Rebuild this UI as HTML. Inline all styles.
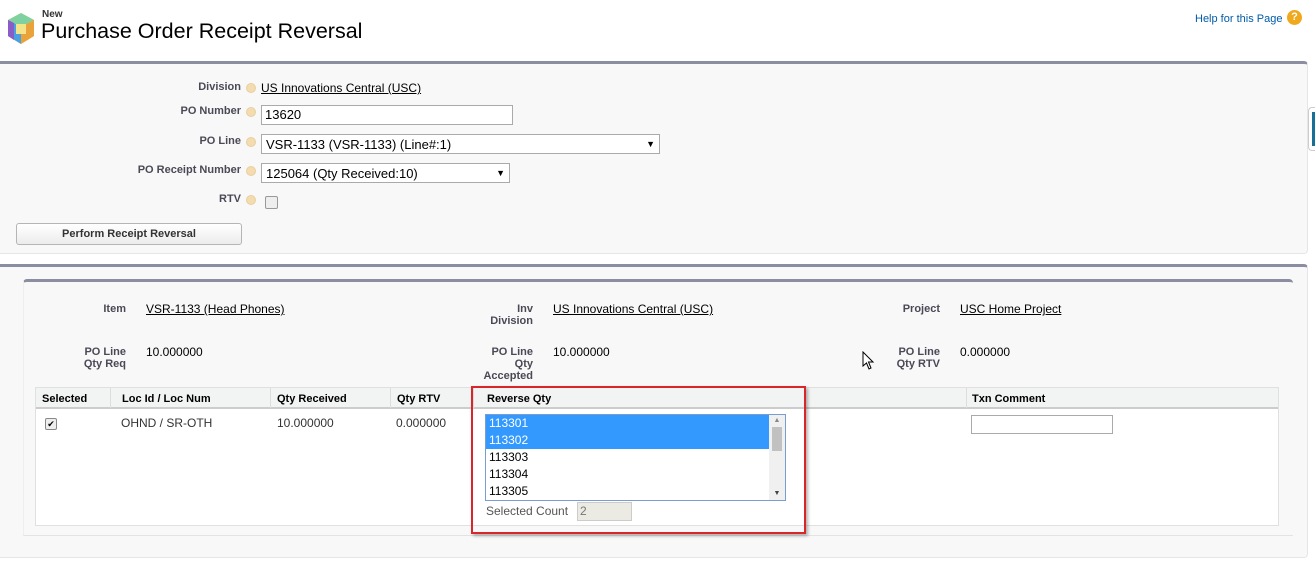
<!DOCTYPE html>
<html><head><style>
body{margin:0;width:1315px;height:565px;background:#fff;font-family:"Liberation Sans",Arial,sans-serif;position:relative;overflow:hidden;color:#000}
.a{position:absolute}
.lbl{font-size:11px;font-weight:bold;color:#4a4a56;text-align:right}
.q{width:10px;height:10px;border-radius:50%;background:#f2dcb0;border:1px solid #e9cf9c;box-sizing:border-box}
.u{text-decoration:underline;font-size:12px;color:#000}
.l2{font-size:11px;font-weight:bold;color:#4a4a56;text-align:right;line-height:12px}
.v{font-size:12px;color:#000}
.th{font-size:11px;font-weight:bold;color:#000;top:393px}
.td{font-size:12px;color:#333;top:416px}
</style></head><body>
<svg class="a" style="left:6px;top:12px" width="30" height="34" viewBox="0 0 30 34">
<polygon points="15,1 28,8 28,24 15,32 2,24 2,8" fill="#f2c94c"/>
<polygon points="15,1 28,8 15,15 2,8" fill="#7fd1a0"/>
<polygon points="2,8 15,15 15,32 2,24" fill="#4aa0e0"/>
<polygon points="28,8 15,15 15,32 28,24" fill="#e9a33a"/>
<polygon points="2,8 8,11 8,28 2,24" fill="#8a5cc8"/>
<rect x="10" y="12" width="10" height="10" fill="#f5e38a"/>
</svg>
<div class="a" style="left:42px;top:9px;font-size:10px;font-weight:bold;color:#333">New</div>
<div class="a" style="left:41px;top:19px;font-size:21.5px;color:#000">Purchase Order Receipt Reversal</div>
<div class="a" style="left:1195px;top:13px;font-size:11px;color:#015ba7">Help for this Page</div>
<div class="a" style="left:1287px;top:10px;width:15px;height:15px;border-radius:50%;background:#f0a81c;color:#fff;font-size:11px;font-weight:bold;text-align:center;line-height:15px">?</div>

<div class="a" style="left:0;top:61px;width:1307px;height:189px;background:#f8f8f8;border-top:3px solid #8a8ea0;border-right:1px solid #e6e6e6;border-bottom:1px solid #e6e6e6;border-radius:0 4px 4px 0"></div>
<div class="a" style="left:1308px;top:107px;width:7px;height:42px;border:1px solid #ccc;border-right:none;border-radius:4px 0 0 4px;background:#fff"><div style="margin-left:3px;width:4px;height:34px;margin-top:4px;background:#1a6e9a"></div></div>

<div class="a lbl" style="left:100px;width:141px;top:81px">Division</div><div class="a q" style="left:246px;top:83px"></div>
<div class="a u" style="left:261px;top:81px">US Innovations Central (USC)</div>
<div class="a lbl" style="left:100px;width:141px;top:105px">PO Number</div><div class="a q" style="left:246px;top:107px"></div>
<div class="a" style="left:261px;top:105px;width:252px;border:1px solid #aaa;background:#fff;font-size:13px;line-height:18px;padding-left:3px;box-sizing:border-box;height:20px">13620</div>
<div class="a lbl" style="left:100px;width:141px;top:135px">PO Line</div><div class="a q" style="left:246px;top:137px"></div>
<div class="a" style="left:261px;top:134px;width:399px;height:20px;border:1px solid #aaa;background:#fff;font-size:13px;line-height:19px;padding-left:4px;box-sizing:border-box">VSR-1133 (VSR-1133) (Line#:1)<span style="position:absolute;right:4px;font-size:9px">▼</span></div>
<div class="a lbl" style="left:100px;width:141px;top:164px">PO Receipt Number</div><div class="a q" style="left:246px;top:166px"></div>
<div class="a" style="left:261px;top:163px;width:249px;height:20px;border:1px solid #aaa;background:#fff;font-size:13px;line-height:19px;padding-left:4px;box-sizing:border-box">125064 (Qty Received:10)<span style="position:absolute;right:4px;font-size:9px">▼</span></div>
<div class="a lbl" style="left:100px;width:141px;top:193px">RTV</div><div class="a q" style="left:246px;top:195px"></div>
<div class="a" style="left:265px;top:196px;width:11px;height:11px;border:1px solid #999;border-radius:2px;background:#eee"></div>
<div class="a" style="left:16px;top:223px;width:224px;height:20px;border:1px solid #b5b5b5;border-radius:3px;background:linear-gradient(#fff,#ececec);font-size:11px;font-weight:bold;color:#333;text-align:center;line-height:20px">Perform Receipt Reversal</div>

<div class="a" style="left:0;top:264px;width:1307px;height:290px;background:#f8f8f8;border-top:3px solid #8a8ea0;border-right:1px solid #e6e6e6;border-bottom:1px solid #e6e6e6;border-radius:0 4px 4px 0"></div>
<div class="a" style="left:23px;top:279px;width:1269px;height:253px;background:#f8f8f8;border-top:3px solid #8a8ea0;border-left:1px solid #eee;border-bottom:1px solid #e3e3e3;border-radius:4px 4px 0 0"></div>

<div class="a l2" style="left:60px;width:66px;top:303px">Item</div>
<div class="a u" style="left:146px;top:302px">VSR-1133 (Head Phones)</div>
<div class="a l2" style="left:460px;width:73px;top:303px">Inv<br>Division</div>
<div class="a u" style="left:553px;top:302px">US Innovations Central (USC)</div>
<div class="a l2" style="left:870px;width:70px;top:303px">Project</div>
<div class="a u" style="left:960px;top:302px">USC Home Project</div>
<div class="a l2" style="left:60px;width:66px;top:346px">PO Line<br>Qty Req</div>
<div class="a v" style="left:146px;top:345px">10.000000</div>
<div class="a l2" style="left:460px;width:73px;top:346px">PO Line<br>Qty<br>Accepted</div>
<div class="a v" style="left:553px;top:345px">10.000000</div>
<div class="a l2" style="left:870px;width:70px;top:346px">PO Line<br>Qty RTV</div>
<div class="a v" style="left:960px;top:345px">0.000000</div>
<svg class="a" style="left:862px;top:351px" width="14" height="20"><path d="M1 1 L1 15 L4.5 12 L7 18 L9 17 L6.5 11 L11 11 Z" fill="#fff" stroke="#000"/></svg>

<div class="a" style="left:35px;top:387px;width:1244px;height:139px;background:#fff;border:1px solid #e0e0e0;box-sizing:border-box"></div>
<div class="a" style="left:36px;top:388px;width:1242px;height:21px;background:#f2f3f3;border-bottom:2px solid #ccc;box-sizing:border-box"></div>
<div class="a" style="left:110px;top:388px;width:1px;height:20px;background:#ddd"></div>
<div class="a" style="left:270px;top:388px;width:1px;height:20px;background:#ddd"></div>
<div class="a" style="left:390px;top:388px;width:1px;height:20px;background:#ddd"></div>
<div class="a" style="left:473px;top:388px;width:1px;height:20px;background:#ddd"></div>
<div class="a" style="left:966px;top:388px;width:1px;height:20px;background:#ddd"></div>
<div class="a th" style="left:42px">Selected</div>
<div class="a th" style="left:122px">Loc Id / Loc Num</div>
<div class="a th" style="left:277px">Qty Received</div>
<div class="a th" style="left:397px">Qty RTV</div>
<div class="a th" style="left:487px">Reverse Qty</div>
<div class="a th" style="left:972px">Txn Comment</div>

<div class="a" style="left:45px;top:418px;width:10px;height:10px;border:1px solid #888;border-radius:2px;background:#eee;font-size:9px;line-height:10px;text-align:center">✔</div>
<div class="a td" style="left:121px">OHND / SR-OTH</div>
<div class="a td" style="left:277px">10.000000</div>
<div class="a td" style="left:396px">0.000000</div>

<div class="a" style="left:485px;top:414px;width:301px;height:87px;border:1px solid #7a9cd3;background:#fff;box-sizing:border-box;font-size:12px;line-height:17px;overflow:hidden">
<div style="background:#3399ff;color:#fff;width:280px;padding-left:3px">113301</div>
<div style="background:#3399ff;color:#fff;width:280px;padding-left:3px">113302</div>
<div style="padding-left:3px">113303</div>
<div style="padding-left:3px">113304</div>
<div style="padding-left:3px">113305</div>
<div style="position:absolute;right:0;top:0;width:16px;height:85px;background:#f0f0f0"><div style="font-size:7px;color:#888;text-align:center;line-height:12px">▲</div><div style="margin:0 3px;height:24px;background:#c1c1c1"></div><div style="position:absolute;bottom:0;width:16px;font-size:7px;text-align:center;line-height:12px;color:#444">▼</div></div>
</div>
<div class="a" style="left:486px;top:504px;font-size:12px;color:#555">Selected Count</div>
<div class="a" style="left:577px;top:502px;width:55px;height:19px;border:1px solid #ccc;background:#ebebe4;box-sizing:border-box;font-size:12px;color:#777;padding-left:2px;line-height:17px">2</div>
<div class="a" style="left:471px;top:386px;width:335px;height:148px;border:2px solid #d9262b;box-sizing:border-box;box-shadow:2px 2px 3px rgba(0,0,0,.3)"></div>

<div class="a" style="left:971px;top:415px;width:142px;height:19px;border:1px solid #aaa;background:#fff;box-sizing:border-box"></div>
</body></html>
